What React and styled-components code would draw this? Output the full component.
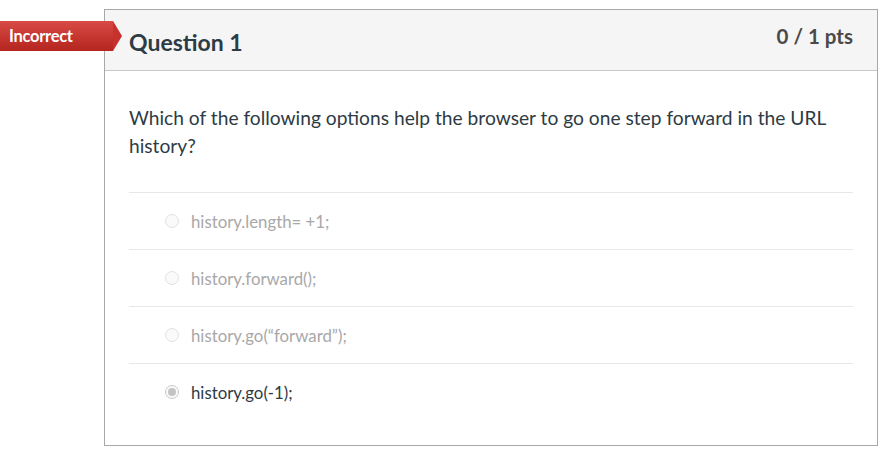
import React from "react";
import styled, { createGlobalStyle } from "styled-components";

const Global = createGlobalStyle`
  html, body { margin: 0; padding: 0; background: #fff; }
  body { font-family: Lato, "Open Sans", sans-serif; }
`;

const Page = styled.div`
  padding: 9px 17px 0 104px;
  width: 894px;
  box-sizing: border-box;
`;

const Card = styled.section`
  position: relative;
  border: 1px solid #a8a8a8;
  box-sizing: border-box;
  width: 774px;
  height: 437px;
`;

const Badge = styled.div`
  position: absolute;
  left: -105px;
  top: 11px;
  height: 30px;
  width: 113px;
  background: linear-gradient(#d84a45, #b52520);
  color: #fff;
  font-weight: 700;
  font-size: 16.5px;
  line-height: 30px;
  padding-left: 9px;
  box-sizing: border-box;
  letter-spacing: -0.3px;
  &::after {
    content: "";
    position: absolute;
    right: -9px;
    top: 0;
    border-top: 15px solid transparent;
    border-bottom: 15px solid transparent;
    border-left: 9px solid #c6322d;
  }
`;

const Header = styled.header`
  display: flex;
  justify-content: space-between;
  align-items: flex-start;
  height: 60px;
  background: #f5f5f5;
  border-bottom: 1px solid #c7c7c7;
  padding: 0 24px;
  color: #2d3b45;
`;

const Title = styled.h2`
  margin: 18px 0 0;
  font-size: 23px;
  font-weight: 700;
  line-height: 28px;
`;

const Points = styled.div`
  margin-top: 13px;
  font-size: 20.5px;
  font-weight: 700;
  color: #4a4a4a;
  line-height: 26px;
`;

const Body = styled.div`
  padding: 33px 24px 24px;
`;

const QuestionText = styled.p`
  margin: 0 0 32px;
  font-size: 19.2px;
  line-height: 28px;
  color: #2d3b45;
`;

const Answers = styled.div`
  display: flex;
  flex-direction: column;
`;

const Answer = styled.div`
  display: flex;
  align-items: center;
  height: 57px;
  border-top: 1px solid #e8e8e8;
  box-sizing: border-box;
  padding-left: 36px;
  gap: 12px;
  font-size: 16.8px;
  color: ${(p) => (p.selected ? "#2d3b45" : "#a8a8a8")};
`;

const Radio = styled.span`
  width: 12px;
  height: 12px;
  border-radius: 50%;
  border: 1px solid ${(p) => (p.selected ? "#c8c8c8" : "#e2e2e2")};
  background: #fafafa;
  display: flex;
  align-items: center;
  justify-content: center;
  margin-top: -1px;
  &::after {
    content: "";
    width: 8px;
    height: 8px;
    border-radius: 50%;
    background: ${(p) => (p.selected ? "#c4c4c4" : "transparent")};
  }
`;

const answers = [
  { text: "history.length= +1;" },
  { text: "history.forward();" },
  { text: "history.go(“forward”);" },
  { text: "history.go(-1);", selected: true },
];

export default function App() {
  return (
    <>
      <Global />
      <Page>
        <Card>
          <Badge>Incorrect</Badge>
          <Header>
            <Title>Question 1</Title>
            <Points>0 / 1 pts</Points>
          </Header>
          <Body>
            <QuestionText>
              Which of the following options help the browser to go one step forward in the URL history?
            </QuestionText>
            <Answers>
              {answers.map((a) => (
                <Answer key={a.text} selected={a.selected}>
                  <Radio selected={a.selected} />
                  {a.text}
                </Answer>
              ))}
            </Answers>
          </Body>
        </Card>
      </Page>
    </>
  );
}
